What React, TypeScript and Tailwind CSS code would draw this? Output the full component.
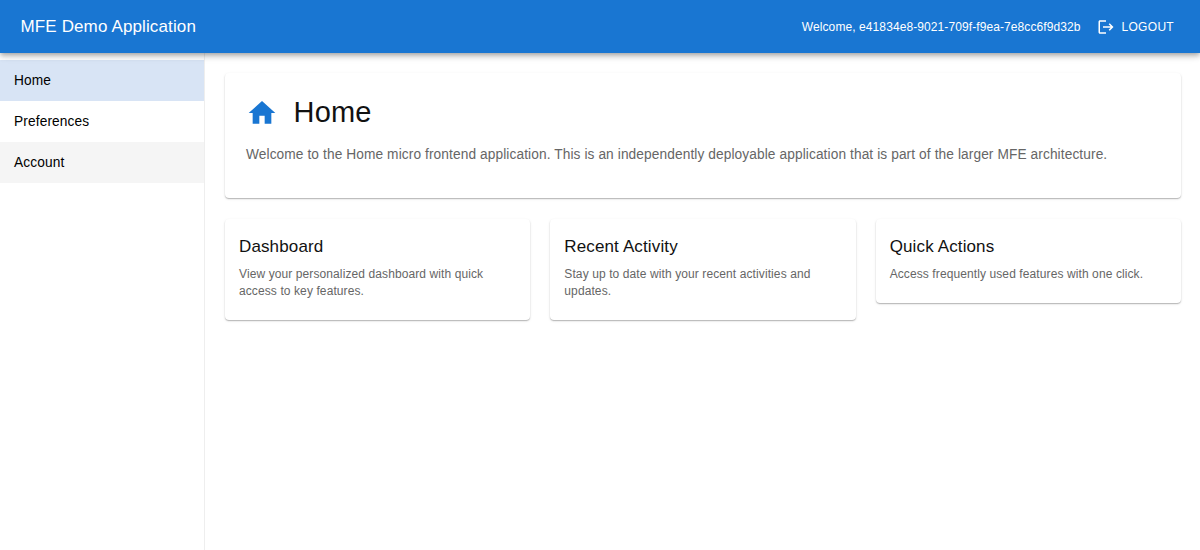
import React from 'react';

const navItems = [
    { label: 'Home', className: 'bg-[#d8e4f5]' },
    { label: 'Preferences', className: 'bg-white' },
    { label: 'Account', className: 'bg-[#f5f5f5]' },
];

const cards = [
    { title: 'Dashboard', text: 'View your personalized dashboard with quick access to key features.' },
    { title: 'Recent Activity', text: 'Stay up to date with your recent activities and updates.' },
    { title: 'Quick Actions', text: 'Access frequently used features with one click.' },
];

const cardShadow = 'shadow-[0_1px_2px_-1px_rgba(0,0,0,0.35),0_1px_1px_0_rgba(0,0,0,0.14),0_1px_3px_0_rgba(0,0,0,0.1)]';

const App: React.FC = () => {
    return (
        <div className="h-screen w-full bg-white flex flex-col overflow-hidden font-['Liberation_Sans',Arial,sans-serif]">
            <header className="relative z-10 h-[53px] shrink-0 bg-[#1976d2] text-white flex items-center pl-[20.5px] pr-[26px] shadow-[0_2px_4px_-1px_rgba(0,0,0,0.2),0_4px_5px_0_rgba(0,0,0,0.14),0_1px_10px_0_rgba(0,0,0,0.12)]">
                <h1 className="text-[17px] leading-none tracking-[0.13px] grow">MFE Demo Application</h1>
                <span className="text-[12px] tracking-[0.09px]">Welcome, e41834e8-9021-709f-f9ea-7e8cc6f9d32b</span>
                <button className="ml-[16px] flex items-center gap-[7px] text-[12px] tracking-[0.3px]">
                    <svg viewBox="0 0 24 24" className="w-[18px] h-[18px] fill-current">
                        <path d="M17 7l-1.41 1.41L18.17 11H8v2h10.17l-2.58 2.58L17 17l5-5zM4 5h8V3H4c-1.1 0-2 .9-2 2v14c0 1.1.9 2 2 2h8v-2H4V5z" />
                    </svg>
                    LOGOUT
                </button>
            </header>
            <div className="flex grow min-h-0">
                <nav className="w-[205px] shrink-0 border-r border-[#eeeeee] pt-[7px]">
                    {navItems.map(item => (
                        <div key={item.label} className={`h-[41px] flex items-center pl-[14px] pt-[2px] text-[13.71px] text-black tracking-[0.13px] ${item.className}`}>
                            {item.label}
                        </div>
                    ))}
                </nav>
                <main className="grow min-w-0 pt-5 pl-5 pr-[19px]">
                    <section className={`h-[125px] bg-white rounded pt-[21px] px-[21px] ${cardShadow}`}>
                        <div className="flex items-center h-[37px]">
                            <svg viewBox="0 0 24 24" className="w-8 h-8 -ml-[0.5px] fill-[#1976d2]">
                                <path d="M10 20v-6h4v6h5v-8h3L12 3 2 12h3v8z" />
                            </svg>
                            <h2 className="ml-4 text-[29px] leading-none text-[#111111] tracking-[0.2px]">Home</h2>
                        </div>
                        <p className="mt-[14px] text-[13.71px] leading-[20px] text-[#666666] tracking-[0.1px]">
                            Welcome to the Home micro frontend application. This is an independently deployable application that is part of the larger MFE architecture.
                        </p>
                    </section>
                    <div className="mt-[21px] grid grid-cols-3 gap-[20px] items-start">
                        {cards.map(card => (
                            <article key={card.title} className={`bg-white rounded px-[14px] pt-[18px] pb-[20px] ${cardShadow}`}>
                                <h3 className="text-[17px] leading-[20px] text-[#111111] tracking-[0.13px]">{card.title}</h3>
                                <p className="mt-[9px] text-[12px] leading-[17px] text-[#666666] tracking-[0.1px]">{card.text}</p>
                            </article>
                        ))}
                    </div>
                </main>
            </div>
        </div>
    );
};

export default App;
